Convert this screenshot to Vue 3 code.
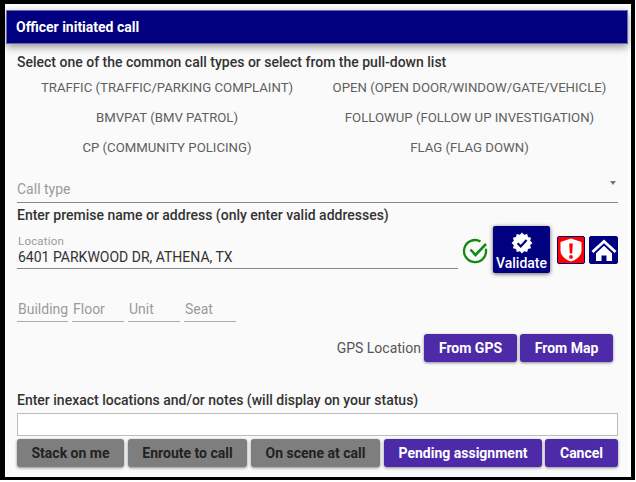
<script setup>
const leftTypes = ['TRAFFIC (TRAFFIC/PARKING COMPLAINT)', 'BMVPAT (BMV PATROL)', 'CP (COMMUNITY POLICING)']
const rightTypes = ['OPEN (OPEN DOOR/WINDOW/GATE/VEHICLE)', 'FOLLOWUP (FOLLOW UP INVESTIGATION)', 'FLAG (FLAG DOWN)']
const callTypes = leftTypes.flatMap((t, i) => [t, rightTypes[i]])
const parts = ['Building', 'Floor', 'Unit', 'Seat']

// Scalloped verified-badge outline: 12 points around the centre of a 24x24 box.
const badge = Array.from({ length: 24 }, (_, i) => {
  const r = i % 2 ? 9.2 : 11.4
  const a = (i * Math.PI) / 12
  return `${(12 + r * Math.sin(a)).toFixed(2)} ${(12 - r * Math.cos(a)).toFixed(2)}`
}).join('L')
</script>

<template>
  <div class="frame">
    <div class="dialog">
      <header class="title">Officer initiated call</header>
      <div class="body">
        <p class="label first">Select one of the common call types or select from the pull-down list</p>
        <div class="types">
          <div v-for="t in callTypes" :key="t" class="type">{{ t }}</div>
        </div>
        <div class="select">
          <span>Call type</span>
          <i class="caret"></i>
        </div>
        <p class="label premise">Enter premise name or address (only enter valid addresses)</p>
        <div class="location-row">
          <div class="location">
            <div class="float">Location</div>
            <div class="value">6401 PARKWOOD DR, ATHENA, TX</div>
          </div>
          <svg class="ok" viewBox="0 0 26 26" width="26" height="26">
            <path d="M23.800 10.800A11 11 0 1 1 18.500 3.500" fill="none" stroke="#118a11" stroke-width="2.300"/>
            <path d="M8.500 11.500l5 5.500L24 6" fill="none" stroke="#118a11" stroke-width="2.600"/>
          </svg>
          <button class="validate">
            <svg viewBox="0 0 24 24" width="22" height="22">
              <path fill="#fff" :d="'M' + badge + 'Z'"/>
              <path fill="none" stroke="#000080" stroke-width="2.400" d="M7.200 12.300l3.400 3.400L17 8.800"/>
            </svg>
            <span>Validate</span>
          </button>
          <div class="icon red">
            <svg viewBox="0 0 28 28" width="28" height="28">
              <path fill="#fff" d="M14 2.500l10.500 3.500v8c0 5.500-4.400 9.800-10.500 11.500C7.900 23.800 3.500 19.500 3.500 14V6z"/>
              <path fill="#f00" d="M12.200 7.500h3.600l-.6 10h-2.400zM14 19a1.900 1.900 0 1 1 0 3.800A1.900 1.900 0 0 1 14 19z"/>
            </svg>
          </div>
          <div class="icon navy">
            <svg viewBox="0 0 28 28" width="28" height="28">
              <path fill="#fff" d="M14 3.500L1.500 15l1.900 2L14 7.300 24.600 17l1.900-2L14 3.500z"/>
              <path fill="#fff" d="M14 9.800l-8 7.400V25h5.500v-5.500h5V25H22v-7.800z"/>
            </svg>
          </div>
        </div>
        <div class="parts">
          <div v-for="p in parts" :key="p" class="part">{{ p }}</div>
        </div>
        <div class="gps-row">
          <span class="gps-label">GPS Location</span>
          <button class="btn primary gps">From GPS</button>
          <button class="btn primary gps">From Map</button>
        </div>
        <p class="label notes">Enter inexact locations and/or notes (will display on your status)</p>
        <div class="notes-input"></div>
        <div class="actions">
          <button class="btn grey stack">Stack on me</button>
          <button class="btn grey enroute">Enroute to call</button>
          <button class="btn grey scene">On scene at call</button>
          <button class="btn primary pending">Pending assignment</button>
          <button class="btn primary cancel">Cancel</button>
        </div>
      </div>
    </div>
  </div>
</template>

<style>
html, body { margin: 0; background: #fff; }
</style>

<style scoped>
.frame {
  width: 635px;
  height: 480px;
  box-sizing: border-box;
  border: 4px solid #000;
  border-left-width: 5px;
  border-bottom-width: 3px;
  background: #fff;
  padding: 6px 3px 0 1px;
  font-family: Roboto, "Liberation Sans", sans-serif;
  overflow: hidden;
}
.dialog { height: 467px; background: #fafafa; }
.title {
  height: 34px;
  line-height: 32px;
  background: #000080;
  color: #fff;
  font-size: 14px;
  font-weight: 700;
  padding-left: 9px;
  border: 1px solid #6a6ab0;
  box-sizing: border-box;
  box-shadow: 0 3px 8px rgba(0, 0, 0, .4);
}
.body { padding: 0 10px 0 11px; }
.label { margin: 0; font-size: 14px; font-weight: 500; color: #333; line-height: 18px; }
.first { padding-top: 9px; }
.types {
  display: grid;
  grid-template-columns: 300px 305px;
  grid-auto-rows: 30px;
  margin-top: 2px;
  justify-content: start;
}
.type { text-align: center; font-size: 13.200px; line-height: 30px; color: #5f5f5f; white-space: nowrap; }
.select {
  height: 28px;
  margin-top: 12px;
  display: flex;
  align-items: center;
  justify-content: space-between;
  border-bottom: 1px solid #888;
  font-size: 14px;
  color: #9a9a9a;
  box-sizing: border-box;
}
.caret { width: 0; height: 0; border: 3.500px solid transparent; border-top: 4px solid #777; border-bottom: 0; margin-right: 2px; margin-top: -12px; }
.premise { margin-top: 3px; }
.location-row { display: flex; align-items: flex-start; margin-top: 2px; height: 52px; }
.location { width: 441px; height: 35px; border-bottom: 1px solid #888; box-sizing: border-box; margin-top: 8px; flex: none; }
.float { font-size: 11.500px; color: #9a9a9a; line-height: 14px; padding-left: 1px; letter-spacing: .2px; }
.value { font-size: 14px; color: #333; line-height: 18px; padding-left: 1px; }
.ok { margin: 12px 0 0 4px; flex: none; }
.validate {
  width: 57px;
  height: 47px;
  margin-left: 5px;
  border: 0;
  padding: 6px 0 0;
  background: #000080;
  border-radius: 2px;
  color: #fff;
  font: 500 14px/16px Roboto, sans-serif;
  display: flex;
  flex-direction: column;
  align-items: center;
  gap: 1px;
  flex: none;
  box-shadow: 0 1px 4px rgba(0, 0, 0, .6);
}
.icon { width: 28px; height: 28px; margin-top: 10px; border: 1px solid #000080; box-sizing: border-box; display: flex; align-items: center; justify-content: center; border-radius: 2px; flex: none; }
.icon svg { flex: none; }
.red { background: #f00; margin-left: 7px; }
.navy { background: #000080; margin-left: 4px; width: 29px; }
.parts { display: flex; gap: 4px; margin-top: 17px; }
.part { width: 51px; height: 27px; line-height: 28px; font-size: 14px; color: #9a9a9a; border-bottom: 1px solid #aaa; box-sizing: border-box; padding-left: 1px; }
.part:nth-child(n+2) { width: 52px; }
.gps-row { display: flex; align-items: center; justify-content: flex-end; gap: 3px; margin-top: 12px; padding-right: 5px; }
.gps-label { font-size: 14px; color: #555; margin-right: 0; }
.btn {
  border: 0;
  border-radius: 3px;
  font: 700 14px Roboto, sans-serif;
  height: 28px;
  padding: 0;
  box-shadow: 0 1px 3px rgba(0, 0, 0, .45);
}
.primary { background: #4c2aa8; color: #fff; }
.grey { background: #7e7e7e; color: #222; }
.gps { width: 93px; }
.notes { margin-top: 29px; }
.notes-input { height: 23px; margin-top: 4px; border: 1px solid #bbb; box-sizing: border-box; background: #fff; }
.actions { display: flex; gap: 3px; margin-top: 3px; }
.stack { width: 107px; margin-right: 1px; }
.enroute { width: 119px; margin-right: 1px; }
.scene { width: 129px; margin-right: 1px; }
.pending { width: 158px; }
.cancel { width: 73px; }
</style>
